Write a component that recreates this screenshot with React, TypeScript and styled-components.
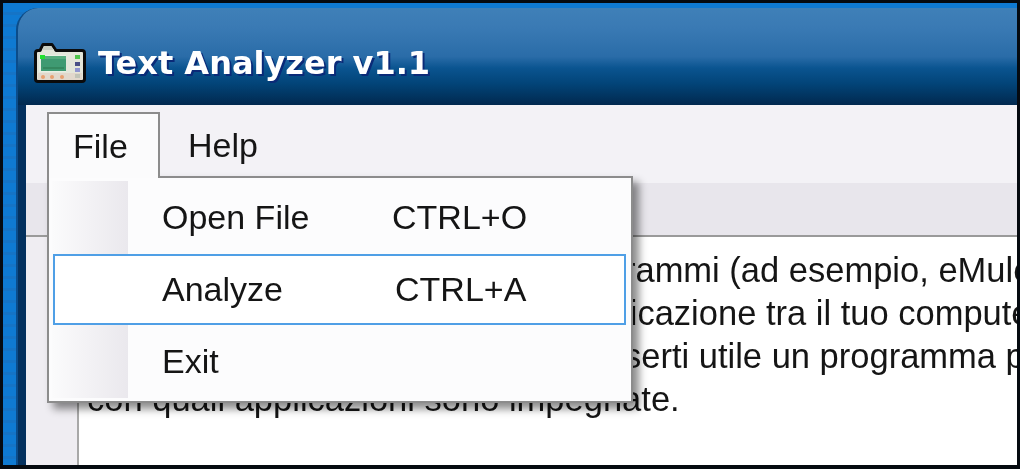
import styled, { createGlobalStyle } from "styled-components";

const Global = createGlobalStyle`
  html, body {
    margin: 0;
    padding: 0;
    background: #000;
  }
  #root {
    width: 1020px;
    height: 469px;
    overflow: hidden;
  }
`;

const AppIcon = () => (
  <svg width="54" height="42" viewBox="0 0 54 42">
    <path d="M2.5 11 Q2.5 8.5 5 8.5 H7 L10 2.5 H19 L23 8.5 H49 Q51.5 8.5 51.5 11 V37 Q51.5 39.5 49 39.5 H5 Q2.5 39.5 2.5 37 Z" fill="#e4e6da" stroke="#0b0b0b" strokeWidth="3" strokeLinejoin="round" />
    <path d="M9 8 L11 4 H18 L21 8 Z" fill="#c9cfc4" />
    <rect x="6" y="13" width="27" height="17" fill="#e9f0e4" />
    <rect x="8" y="14" width="25" height="15" fill="#3f9a72" />
    <rect x="8" y="14" width="25" height="3" fill="#57ad7e" />
    <rect x="7" y="13" width="5" height="4" fill="#22e030" />
    <rect x="10" y="25" width="21" height="2" fill="#35885f" />
    <rect x="42" y="13" width="5" height="4" fill="#4fc44c" />
    <rect x="42" y="20" width="5" height="4" fill="#4a4f86" />
    <rect x="42" y="26" width="5" height="4" fill="#9095d0" />
    <rect x="5" y="31" width="44" height="7" fill="#e2d8cc" />
    <circle cx="10" cy="35" r="2" fill="#e8a070" />
    <circle cx="19" cy="35" r="2" fill="#e8a070" />
    <circle cx="29" cy="35" r="2" fill="#e8a070" />
    <rect x="42" y="32" width="5" height="4" fill="#c2c4b8" />
  </svg>
);

const App = () => {
  return (
    <>
      <Global />
      <Screen>
        <BlueBorder>
          <Window>
            <TitleBar>
              <AppIcon />
              <Title>Text Analyzer v1.1</Title>
            </TitleBar>
            <Client>
              <MenuBar>
                <MenuTab $open>File</MenuTab>
                <MenuTab>Help</MenuTab>
              </MenuBar>
              <ToolBand />
              <TextArea>
                <TextLine>Quando utilizzi alcuni tra i tuoi programmi (ad esempio, eMule, Skype</TextLine>
                <TextLine>e questi aprono dei canali di comunicazione tra il tuo computer e la rete</TextLine>
                <TextLine>In tutti questi casi però potrebbe esserti utile un programma per sapere</TextLine>
                <TextLine>con quali applicazioni sono impegnate.</TextLine>
              </TextArea>
              <Dropdown>
                <IconColumn />
                <MenuItem>
                  <ItemLabel>Open File</ItemLabel>
                  <Shortcut>CTRL+O</Shortcut>
                </MenuItem>
                <MenuItem $active>
                  <ItemLabel>Analyze</ItemLabel>
                  <Shortcut $shift>CTRL+A</Shortcut>
                </MenuItem>
                <MenuItem>
                  <ItemLabel>Exit</ItemLabel>
                </MenuItem>
              </Dropdown>
            </Client>
          </Window>
        </BlueBorder>
      </Screen>
    </>
  );
};

export default App;

const Screen = styled.div`
  box-sizing: border-box;
  width: 1020px;
  height: 469px;
  padding: 3px 3px 4px 3px;
  background: #050a10;
  filter: blur(0.7px);
`;

const BlueBorder = styled.div`
  box-sizing: border-box;
  height: 100%;
  padding: 5px 0 0 13px;
  background: repeating-linear-gradient(#0f7ad2 0 9px, #1574c6 9px 12px);
`;

const Window = styled.div`
  box-sizing: border-box;
  height: 100%;
  display: flex;
  flex-direction: column;
  border-top-left-radius: 22px;
  overflow: hidden;
  background: #03305e;
  border-left: 2px solid #0b4c8a;
`;

const TitleBar = styled.div`
  box-sizing: border-box;
  height: 97px;
  flex: none;
  display: flex;
  align-items: center;
  gap: 11px;
  padding: 12px 0 0 15px;
  background: linear-gradient(
    #3f80b8 0%,
    #3a7ab4 20%,
    #2a6ca8 50%,
    #0a5490 62%,
    #024478 78%,
    #01294f 100%
  );
`;

const Title = styled.div`
  font-family: "DejaVu Sans", sans-serif;
  font-weight: 700;
  font-size: 32px;
  color: #ffffff;
  text-shadow: 2px 2px 0 #0a2a78;
  white-space: nowrap;
`;

const Client = styled.div`
  position: relative;
  flex: 1;
  min-height: 0;
  margin-left: 8px;
  display: flex;
  flex-direction: column;
  background: #efedf2;
  font-family: "Liberation Sans", sans-serif;
  font-size: 34px;
  color: #151515;
`;

const MenuBar = styled.div`
  height: 78px;
  flex: none;
  display: flex;
  align-items: flex-start;
  padding: 7px 0 0 21px;
  box-sizing: border-box;
  background: #f3f2f6;
`;

const MenuTab = styled.div<{ $open?: boolean }>`
  box-sizing: border-box;
  width: ${(p) => (p.$open ? "113px" : "auto")};
  height: 66px;
  padding: ${(p) => (p.$open ? "13px 0 0 24px" : "14px 0 0 28px")};
  ${(p) =>
    p.$open &&
    `
    background: #fbfbfc;
    border: 2px solid #8c8c8c;
    border-bottom: none;
    position: relative;
    z-index: 2;
  `}
`;

const ToolBand = styled.div`
  height: 54px;
  flex: none;
  background: #e8e6ec;
  border-bottom: 2px solid #9a9a9a;
  box-sizing: border-box;
`;

const TextArea = styled.div`
  flex: 1;
  min-height: 0;
  margin-left: 51px;
  padding: 12px 0 0 8px;
  overflow: hidden;
  background: #fff;
  border-left: 2px solid #a8a8a8;
  font-size: 34.5px;
`;

const TextLine = styled.div`
  height: 43px;
  line-height: 43px;
  white-space: nowrap;
`;

const Dropdown = styled.div`
  position: absolute;
  left: 21px;
  top: 71px;
  box-sizing: border-box;
  width: 586px;
  height: 227px;
  padding: 4px 5px 4px 4px;
  display: flex;
  flex-direction: column;
  background: #fcfcfd;
  border: 2px solid #8c8c8c;
  box-shadow: 6px 6px 8px rgba(0, 0, 0, 0.45);
  z-index: 1;
`;

const IconColumn = styled.div`
  position: absolute;
  left: 3px;
  top: 3px;
  bottom: 3px;
  width: 76px;
  background: linear-gradient(90deg, #fbfbfc, #eae8ed);
`;

const MenuItem = styled.div<{ $active?: boolean }>`
  position: relative;
  box-sizing: border-box;
  flex: 1;
  display: flex;
  align-items: center;
  padding-left: 107px;
  border: 2px solid ${(p) => (p.$active ? "#4f9fe6" : "transparent")};
  background: ${(p) => (p.$active ? "#fff" : "transparent")};
`;

const ItemLabel = styled.span`
  width: 230px;
  flex: none;
`;

const Shortcut = styled.span<{ $shift?: boolean }>`
  margin-left: ${(p) => (p.$shift ? "3px" : "0")};
`;
